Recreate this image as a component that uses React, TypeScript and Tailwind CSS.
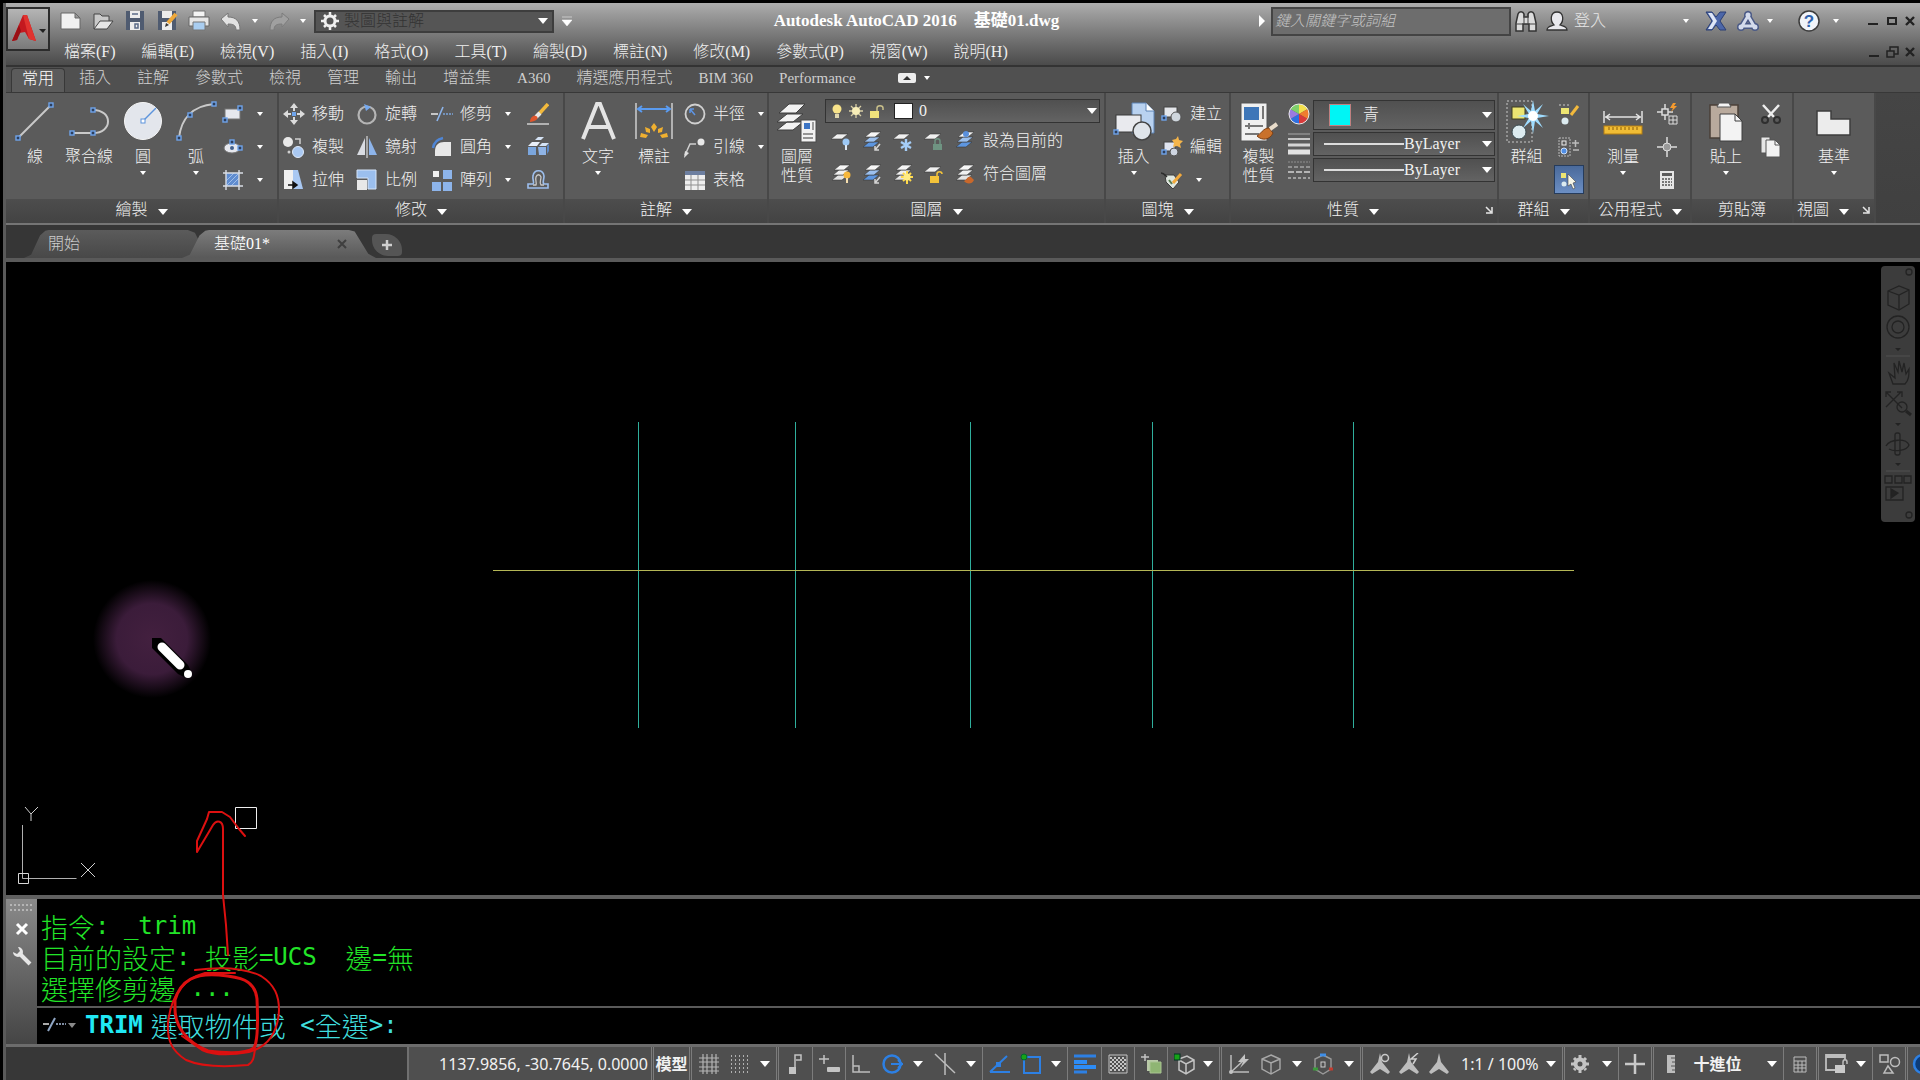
import type { ReactNode } from "react";

type IconProps = { w?: number; h?: number; box?: string; children: ReactNode };

function Icon({ w = 22, h = 22, box, children }: IconProps) {
  return (
    <svg width={w} height={h} viewBox={box ?? `0 0 ${w} ${h}`} fill="none" aria-hidden="true" className="shrink-0">
      {children}
    </svg>
  );
}

function Arrow({ big = false }: { big?: boolean }) {
  return big ? (
    <Icon w={10} h={6}>
      <path d="M0 0h10L5 6z" fill="#fff" />
    </Icon>
  ) : (
    <Icon w={6} h={4}>
      <path d="M0 0h6L3 4z" fill="#fff" />
    </Icon>
  );
}

/* ---------- shared pieces of icon artwork ---------- */

function Grip({ x, y }: { x: number; y: number }) {
  return <rect x={x - 2} y={y - 2} width="4" height="4" fill="#2d3f5c" stroke="#6ea3ea" strokeWidth="1.4" />;
}

function Sheets({ blue = false }: { blue?: boolean }) {
  return (
    <g stroke="#3a3a3a" strokeWidth="0.6">
      <path d="M1 17l6-5h10l-6 5z" fill={blue ? "#5d96e0" : "#e4e4e4"} />
      <path d="M2 12l6-5h10l-6 5z" fill={blue ? "#9cc0ee" : "#f0f0f0"} />
      <path d="M3 7l6-5h10l-6 5z" fill="#f6f6f6" />
    </g>
  );
}

function Sheet() {
  return <path d="M0 9l6-5h11l-6 5z" fill="#f0f0f0" stroke="#3a3a3a" strokeWidth="0.6" />;
}

/* ---------- big ribbon icons (44 x 44) ---------- */

const LineIcon = () => (
  <Icon w={44} h={44}>
    <path d="M5 39L38 6" stroke="#c9c9c9" strokeWidth="2" />
    <Grip x={5} y={39} />
    <Grip x={38} y={6} />
  </Icon>
);

const PolylineIcon = () => (
  <Icon w={44} h={44}>
    <path d="M5 34h21c20 0 20-23 0-23" stroke="#c9c9c9" strokeWidth="2" />
    <Grip x={5} y={34} />
    <Grip x={26} y={34} />
    <Grip x={26} y={11} />
  </Icon>
);

const CircleIcon = () => (
  <Icon w={44} h={44}>
    <circle cx="22" cy="22" r="18.5" fill="#e3e6ec" stroke="#f6f6f6" />
    <path d="M22 22L35 9" stroke="#5c93dc" strokeWidth="1.4" />
    <rect x="20" y="20" width="4" height="4" fill="#fff" stroke="#5c93dc" />
  </Icon>
);

const ArcIcon = () => (
  <Icon w={44} h={44}>
    <path d="M5 39C7 20 18 7 40 5" stroke="#c9c9c9" strokeWidth="2" />
    <Grip x={5} y={39} />
    <Grip x={16} y={16} />
    <Grip x={40} y={5} />
  </Icon>
);

const TextIcon = () => (
  <Icon w={44} h={44}>
    <path d="M7 40L21 5h3l14 35M12 28h21" stroke="#e4e4e4" strokeWidth="4" />
  </Icon>
);

const DimensionIcon = () => (
  <Icon w={44} h={44}>
    <path d="M4 4v36M40 4v36" stroke="#d6d6d6" strokeWidth="1.4" />
    <path d="M6 10h32M10 7l-4 3 4 3M34 7l4 3-4 3" stroke="#5a9bf0" strokeWidth="2" />
    <path d="M22 24l3 4-3 5-3-5zM13 28l5 2v4l-4-1zM31 28l-5 2v4l4-1zM9 34l7 2-2 3-6-1zM35 34l-7 2 2 3 6-1z" fill="#f0b030" />
  </Icon>
);

const LayerPropsIcon = () => (
  <Icon w={44} h={44}>
    <g fill="#f2f2f2" stroke="#3d3d3d">
      <path d="M2 31l10-8h16l-10 8zM2 23l10-8h16l-10 8zM4 14L14 5h16l-9 9z" />
    </g>
    <rect x="26" y="21" width="15" height="22" fill="#f2f2f2" stroke="#4a4a4a" />
    <rect x="29" y="24" width="6" height="6" fill="#3c74c4" />
    <path d="M38 23v8M28 35h10M28 39h10" stroke="#777" strokeWidth="1.4" />
  </Icon>
);

const InsertBlockIcon = () => (
  <Icon w={44} h={44}>
    <path d="M20 4h14l8 8v22H20z" fill="#b9d2f0" stroke="#5d83b5" />
    <path d="M34 4v8h8" fill="#fff" stroke="#5d83b5" />
    <rect x="4" y="16" width="25" height="17" fill="#e9eaee" stroke="#3b3b3b" />
    <circle cx="30" cy="32" r="9" fill="#dfe4ea" stroke="#444" strokeWidth="1.5" />
    <Grip x={4} y={33} />
  </Icon>
);

const MatchPropsIcon = () => (
  <Icon w={44} h={44}>
    <rect x="4" y="4" width="26" height="38" fill="#f0f0f0" stroke="#555" />
    <rect x="7" y="8" width="15" height="13" fill="#3e76b8" />
    <path d="M26 7v13M8 27h18M12 24v6M8 35h14" stroke="#777" strokeWidth="2" />
    <path d="M20 37c4-2 6-8 12-8l4 5c-3 7-11 8-16 3z" fill="#c9712b" stroke="#7d3f14" />
    <path d="M33 30l7-5" stroke="#e8dccb" strokeWidth="4" />
  </Icon>
);

const GroupIcon = () => (
  <Icon w={44} h={44}>
    <rect x="2" y="2" width="25" height="41" stroke="#c8c8c8" strokeDasharray="2 2" />
    <rect x="7" y="8" width="13" height="12" fill="#ece572" stroke="#3c3c20" />
    <circle cx="14" cy="33" r="7" fill="#dcebf0" stroke="#3a4a50" />
    <path d="M28 1l2 11 8-7-6 10 12 2-12 2 6 10-8-7-2 13-2-13-8 7 6-10-12-2 12-2-6-10 8 7z" fill="#9fdcff" />
    <circle cx="28" cy="17" r="5" fill="#fff" />
  </Icon>
);

const MeasureIcon = () => (
  <Icon w={44} h={44}>
    <path d="M3 12v12M41 12v12M4 18h36M9 15l-4 3 4 3M35 15l4 3-4 3" stroke="#e2e2e2" strokeWidth="1.5" />
    <rect x="3" y="27" width="38" height="8" fill="#f1bd35" stroke="#b57f13" />
    <path d="M8 28v3M12 28v3M16 28v3M20 28v3M24 28v3M28 28v3M32 28v3M36 28v3" stroke="#8a5d08" />
  </Icon>
);

const PasteIcon = () => (
  <Icon w={44} h={44}>
    <rect x="6" y="6" width="28" height="33" fill="#b9aa9d" stroke="#4b4039" strokeWidth="1.5" />
    <path d="M13 8l2-4h10l2 4z" fill="#f4f4f4" stroke="#555" />
    <path d="M16 15h15l7 7v20H16z" fill="#f3f3f3" stroke="#3f3f3f" />
    <path d="M31 15v7h7" stroke="#3f3f3f" />
  </Icon>
);

const BaseViewIcon = () => (
  <Icon w={44} h={44}>
    <path d="M5 12h14v8h19v16H5z" fill="#ececec" stroke="#3e3e3e" strokeWidth="1.5" />
  </Icon>
);

/* ---------- small ribbon icons (22 x 22) ---------- */

const RectangleIcon = () => (
  <Icon>
    <rect x="3" y="6" width="15" height="10" fill="#e6e8ee" stroke="#777" />
    <Grip x={3} y={17} />
    <Grip x={18} y={5} />
  </Icon>
);

const EllipseIcon = () => (
  <Icon>
    <ellipse cx="10" cy="12" rx="8" ry="5" fill="#e6e8ee" stroke="#777" />
    <circle cx="10" cy="12" r="2" fill="#44618d" />
    <Grip x={10} y={6} />
    <Grip x={18} y={12} />
  </Icon>
);

const HatchIcon = () => (
  <Icon>
    <rect x="4" y="4" width="13" height="13" fill="#5f8cd0" />
    <path d="M4 12l8-8M4 17L17 4M9 17l8-8" stroke="#9fbfe9" />
    <path d="M4 1v20M17 1v20M1 4h20M1 17h20" stroke="#d9dde5" strokeWidth="1.4" />
  </Icon>
);

const MoveIcon = () => (
  <Icon>
    <path d="M11 0l4 5H7zM11 22l4-5H7zM0 11l5-4v8zM22 11l-5-4v8z" fill="#dcdcdc" />
    <path d="M11 5v3M11 14v3M5 11h3M14 11h3" stroke="#dcdcdc" strokeWidth="2" />
    <rect x="9" y="9" width="4" height="4" fill="#6ea3ea" />
  </Icon>
);

const RotateIcon = () => (
  <Icon>
    <circle cx="11" cy="12" r="8.5" stroke="#b5b5b5" strokeWidth="2.2" />
    <path d="M8 1l7 3-5 4z" fill="#76a9ee" />
  </Icon>
);

const TrimIcon = () => (
  <Icon>
    <path d="M0 11h7" stroke="#e2e2e2" strokeWidth="1.6" />
    <path d="M12 11h10" stroke="#7ca5dc" strokeWidth="1.6" strokeDasharray="2 1" />
    <path d="M6 18L12 4" stroke="#8db4ea" strokeWidth="1.6" />
  </Icon>
);

const CopyIcon = () => (
  <Icon>
    <circle cx="5" cy="6" r="5" fill="#e8e8e8" />
    <circle cx="15" cy="16" r="5.5" fill="#a9c8f2" stroke="#dfeafa" />
    <path d="M12 3h5v5" stroke="#cfcfcf" strokeWidth="1.5" />
    <circle cx="6" cy="16" r="1.5" fill="#cfcfcf" />
  </Icon>
);

const MirrorIcon = () => (
  <Icon>
    <path d="M9 2v17H1z" fill="#d9dce2" />
    <path d="M13 2v17h8z" fill="#8db4ea" />
    <path d="M11 0v22" stroke="#f0f0f0" />
  </Icon>
);

const FilletIcon = () => (
  <Icon>
    <path d="M2 12C3 6 7 3 12 2" stroke="#4f86d6" strokeWidth="2.5" />
    <path d="M4 20v-5c0-6 4-9 9-9h7v14z" fill="#e8e8e8" />
  </Icon>
);

const StretchIcon = () => (
  <Icon>
    <path d="M1 1h9v19H1z" fill="#f0f0f0" />
    <path d="M10 1h5l5 19H10z" fill="#a9c8f2" />
    <path d="M5 16h6M10 13l4 3-4 3z" stroke="#111" fill="#111" strokeWidth="1.5" />
  </Icon>
);

const ScaleIcon = () => (
  <Icon>
    <path d="M1 1h19v19h-8V9H1z" fill="#9bbfee" stroke="#d5e4f8" />
    <rect x="1" y="11" width="10" height="10" fill="#e8e8e8" />
  </Icon>
);

const ArrayIcon = () => (
  <Icon>
    <rect x="2" y="2" width="6" height="6" fill="#f0f0f0" />
    <rect x="12" y="1" width="9" height="9" fill="#8db4ea" />
    <rect x="1" y="13" width="9" height="9" fill="#8db4ea" />
    <rect x="12" y="13" width="9" height="9" fill="#8db4ea" />
  </Icon>
);

const EraseIcon = () => (
  <Icon>
    <path d="M11 12L21 1" stroke="#f2b93c" strokeWidth="3.5" />
    <path d="M9 14l4-4" stroke="#e8e8e8" strokeWidth="4" />
    <path d="M3 19c0-4 3-7 6-6s2 5-6 6z" fill="#e0562c" />
    <path d="M0 21h22" stroke="#cfcfcf" strokeWidth="1.5" />
  </Icon>
);

const ExplodeIcon = () => (
  <Icon>
    <path d="M1 10l4-4h8l-3 4z" fill="#e9eff8" />
    <path d="M1 11h8v8H1z" fill="#7ba6dd" />
    <path d="M8 4l3-3h6l-3 3z" fill="#d5e3f5" />
    <path d="M12 10l3-3h7l-3 3z" fill="#d5e3f5" />
    <path d="M11 11h8v8h-7z" fill="#8fb4e6" />
    <path d="M20 10l2-2v7l-2 3z" fill="#5d88c4" />
  </Icon>
);

const OffsetIcon = () => (
  <Icon>
    <path d="M1 19v-4h5c2-1-1-4 0-8 1-7 10-7 11 0 0 4-2 7 0 8h4v4z" stroke="#9dbfee" strokeWidth="1.6" />
    <path d="M6 16h3c1-2-1-5 0-8 1-3 4-3 5 0 0 3-2 6 0 8h3" stroke="#c9c9c9" strokeWidth="1.3" />
  </Icon>
);

const RadiusIcon = () => (
  <Icon>
    <circle cx="11" cy="11" r="9.5" stroke="#d0d0d0" strokeWidth="1.8" />
    <path d="M11 12L6 6M6 6v4M6 6h4" stroke="#5e95e4" strokeWidth="1.5" />
  </Icon>
);

const LeaderIcon = () => (
  <Icon>
    <path d="M1 19L6 8h6" stroke="#d0d0d0" strokeWidth="1.5" />
    <path d="M0 22l1-7 4 2z" fill="#e0e0e0" />
    <circle cx="17" cy="6" r="3.5" fill="#e8e8e8" />
  </Icon>
);

const TableIcon = () => (
  <Icon>
    <rect x="1" y="2" width="20" height="19" fill="#eeeeee" />
    <rect x="1" y="2" width="20" height="4" fill="#6d7fa0" />
    <path d="M1 11h20M1 16h20M7 6v15M14 6v15" stroke="#8f8f8f" />
  </Icon>
);

const LayerOffIcon = () => (
  <Icon w={20}>
    <Sheet />
    <circle cx="15" cy="12" r="3.5" fill="#9cc8f5" />
    <path d="M15 15v5" stroke="#dce8f5" strokeWidth="2" />
  </Icon>
);

const LayerIsolateIcon = () => (
  <Icon w={20}>
    <Sheets blue />
    <path d="M18 14l-5 6M13 16v4h4" stroke="#d5d5d5" strokeWidth="1.5" />
  </Icon>
);

const LayerFreezeIcon = () => (
  <Icon w={20}>
    <Sheet />
    <path d="M13 9v12M8 12l10 6M8 18l10-6" stroke="#a5cdf7" strokeWidth="2.4" />
  </Icon>
);

const LayerLockIcon = () => (
  <Icon w={20}>
    <Sheet />
    <path d="M11 14v-3c0-3 5-3 5 0v3" stroke="#6f9482" strokeWidth="1.5" />
    <rect x="9" y="14" width="9" height="6" fill="#6f9482" />
  </Icon>
);

const LayerCurrentIcon = () => (
  <Icon w={20}>
    <Sheets blue />
    <circle cx="11" cy="4" r="3" fill="#5a90dc" />
  </Icon>
);

const LayerOnIcon = () => (
  <Icon w={20}>
    <Sheets />
    <circle cx="16" cy="12" r="3.5" fill="#f6b73c" />
    <path d="M16 15v5" stroke="#f6dfae" strokeWidth="2" />
  </Icon>
);

const LayerThawIcon = () => (
  <Icon w={20}>
    <Sheets />
    <path d="M14 8v13M8 14h12M10 10l8 8M10 18l8-8" stroke="#ffd94a" strokeWidth="2" />
    <circle cx="14" cy="14" r="3.5" fill="#ffec86" />
  </Icon>
);

const LayerUnlockIcon = () => (
  <Icon w={20}>
    <Sheet />
    <path d="M13 14v-3c0-3 5-3 5 0" stroke="#f3c33a" strokeWidth="1.5" />
    <rect x="6" y="13" width="9" height="7" fill="#f3c33a" />
  </Icon>
);

const LayerMatchIcon = () => (
  <Icon w={20}>
    <Sheets />
    <path d="M9 18c3-1 3-5 7-4l3 3c-2 5-8 4-10 1z" fill="#c9682b" />
  </Icon>
);

const BlockCreateIcon = () => (
  <Icon>
    <rect x="3" y="4" width="13" height="10" fill="#e4e6ea" stroke="#444" />
    <circle cx="15" cy="14" r="5" fill="#cfd6dd" stroke="#555" />
    <Grip x={3} y={15} />
  </Icon>
);

const BlockEditIcon = () => (
  <Icon>
    <rect x="3" y="6" width="11" height="9" fill="#dfe4f0" stroke="#444" />
    <circle cx="13" cy="16" r="4" fill="#cfd6e2" stroke="#555" />
    <path d="M17 0l1 4 4 1-3 3 1 4-4-2-4 1 1-4-2-3 4-1z" fill="#f5b54a" />
    <Grip x={3} y={16} />
  </Icon>
);

const BlockAttrIcon = () => (
  <Icon>
    <path d="M4 6h9l5 7-6 7-7-7z" fill="#dfe6df" stroke="#3c3c3c" />
    <path d="M0 4c3 0 4 2 6 4" stroke="#2c2c2c" strokeWidth="1.5" />
    <path d="M8 11l3 4" stroke="#5a7d53" strokeWidth="2" />
    <path d="M12 14L20 5" stroke="#f2a93c" strokeWidth="3" />
  </Icon>
);

const ColorWheelIcon = () => (
  <Icon>
    <path d="M11 11V1a10 10 0 018.700 5z" fill="#f4e04d" />
    <path d="M11 11l8.700-5a10 10 0 010 10z" fill="#f07d2e" />
    <path d="M11 11l8.700 5A10 10 0 0111 21z" fill="#d93a3a" />
    <path d="M11 11v10a10 10 0 01-8.700-5z" fill="#2f6fe0" />
    <path d="M11 11l-8.700 5a10 10 0 010-10z" fill="#9a7be0" />
    <path d="M11 11L2.300 6A10 10 0 0111 1z" fill="#7ed06a" />
    <circle cx="11" cy="11" r="10" stroke="#e8e8e8" />
  </Icon>
);

const LineweightIcon = () => (
  <Icon>
    <path d="M0 1h22" stroke="#aaa" />
    <path d="M0 6h22" stroke="#c8c8c8" strokeWidth="2" />
    <path d="M0 12h22" stroke="#d4d4d4" strokeWidth="3" />
    <path d="M0 19h22" stroke="#e2e2e2" strokeWidth="5" />
  </Icon>
);

const LinetypeIcon = () => (
  <Icon>
    <path d="M0 3h22" stroke="#909090" strokeDasharray="2 1" />
    <path d="M0 8h22" stroke="#a5a5a5" strokeDasharray="4 2" strokeWidth="1.5" />
    <path d="M0 13h22" stroke="#b5b5b5" strokeDasharray="6 2" strokeWidth="2" />
    <path d="M0 19h22" stroke="#a0a0a0" strokeDasharray="3 2" strokeWidth="2" />
  </Icon>
);

const UngroupIcon = () => (
  <Icon>
    <path d="M1 2h12" stroke="#ccc" strokeDasharray="2 2" />
    <rect x="3" y="5" width="8" height="6" fill="#ece572" />
    <circle cx="7" cy="18" r="3.5" fill="#dcebf0" />
    <path d="M13 12l7-9" stroke="#f2b93c" strokeWidth="3" />
  </Icon>
);

const GroupEditIcon = () => (
  <Icon>
    <rect x="1" y="2" width="11" height="18" stroke="#bbb" strokeDasharray="2 1" />
    <rect x="4" y="5" width="4" height="4" stroke="#eee" />
    <circle cx="6" cy="15" r="3" fill="#4f8ee6" stroke="#cfe0f7" />
    <path d="M14 7h7M17.500 4v7M15 14h6" stroke="#bbb" strokeWidth="1.5" />
  </Icon>
);

const GroupSelectIcon = () => (
  <Icon>
    <rect x="3" y="4" width="5" height="5" fill="#ece572" />
    <circle cx="6" cy="15" r="2.5" fill="#dcebf0" />
    <path d="M10 5l8 8-3 1 2 5-2 1-2-5-3 2z" fill="#f6f6e8" stroke="#444" strokeWidth="0.6" />
  </Icon>
);

const QuickSelectIcon = () => (
  <Icon>
    <path d="M9 1v16M1 9h16" stroke="#ddd" strokeWidth="1.5" />
    <rect x="6" y="6" width="6" height="6" fill="#5b5b5b" stroke="#ddd" strokeWidth="1.5" />
    <path d="M17 0l-3 5h3l-2 4 6-6h-3l2-3z" fill="#f59a2e" />
    <path d="M13 13h8v8h-8zM13 17h8M17 13v8" stroke="#ddd" />
  </Icon>
);

const PointIcon = () => (
  <Icon>
    <path d="M11 1v20M1 11h20" stroke="#ddd" strokeWidth="1.5" />
    <circle cx="11" cy="11" r="4" fill="#9a9a9a" stroke="#ddd" />
  </Icon>
);

const CalculatorIcon = () => (
  <Icon>
    <rect x="4" y="2" width="14" height="18" fill="#e6e6e6" />
    <rect x="6" y="4" width="10" height="3" fill="#5c5c5c" />
    <path d="M6 10h10M6 13h10M6 16h10" stroke="#777" strokeWidth="2" strokeDasharray="2 1" />
  </Icon>
);

const CutIcon = () => (
  <Icon>
    <path d="M3 2l11 12M19 2L8 14" stroke="#eee" strokeWidth="2.5" />
    <circle cx="5" cy="17" r="3" stroke="#2f2f2f" strokeWidth="2" />
    <circle cx="17" cy="17" r="3" stroke="#2f2f2f" strokeWidth="2" />
  </Icon>
);

const CopyClipIcon = () => (
  <Icon>
    <path d="M1 1h9v16H1z" fill="#e6e6e6" stroke="#555" />
    <path d="M6 4h9l5 5v12H6z" fill="#f2f2f2" stroke="#555" />
    <path d="M15 4v5h5" stroke="#555" />
  </Icon>
);

/* ---------- title bar ---------- */

const quickAccess: { label: string; art: ReactNode }[] = [
  { label: "新建", art: <path d="M1 3h14l5 5v11H1zM15 3v5h5" fill="#f0f0f0" stroke="#666" /> },
  {
    label: "開啟",
    art: (
      <>
        <path d="M2 19V4h6l2 2h7v5" fill="#c9c9c9" stroke="#444" />
        <path d="M2 19l6-8h13l-6 8z" fill="#e6e6e6" stroke="#444" />
      </>
    ),
  },
  {
    label: "儲存",
    art: (
      <>
        <path d="M2 1h18v19H2z" fill="#4f5b70" />
        <path d="M6 1h10v7H6zM6 12h10v8H6z" fill="#ececec" />
        <path d="M8 4h6M11 14h3v4h-3z" stroke="#5a6a86" strokeWidth="1.5" />
      </>
    ),
  },
  {
    label: "另存",
    art: (
      <>
        <path d="M2 1h18v19H2z" fill="#4f5b70" />
        <path d="M6 1h10v7H6zM6 12h10v8H6z" fill="#ececec" />
        <path d="M12 13l8-9" stroke="#f0a93a" strokeWidth="4" />
        <path d="M9 17l1-4 3 2z" fill="#333" />
      </>
    ),
  },
  {
    label: "出圖",
    art: (
      <>
        <path d="M5 1h12v6H5z" fill="#f4f4f4" stroke="#777" />
        <path d="M1 7h20v9H1z" fill="#e6e6e6" stroke="#666" />
        <path d="M5 12h12v8H5z" fill="#a9cdf0" stroke="#777" />
      </>
    ),
  },
  { label: "退回", art: <path d="M1 9l7-6v4c8 0 12 4 12 13h-4c0-5-3-6-8-6v3z" fill="#e2e2e2" stroke="#777" /> },
];

const menus = [
  "檔案(F)", "編輯(E)", "檢視(V)", "插入(I)", "格式(O)", "工具(T)",
  "繪製(D)", "標註(N)", "修改(M)", "參數式(P)", "視窗(W)", "說明(H)",
];

function TitleBar() {
  return (
    <header className="flex h-[62px] bg-linear-to-b from-[#adadad] to-[#4b4b4b]">
      <button
        type="button"
        aria-label="應用程式功能表"
        className="mt-1 flex h-11 w-11 shrink-0 items-center justify-center border-2 border-[#2c2c2c] bg-linear-to-b from-[#b5b5b5] to-[#7a7a7a]"
      >
        <Icon w={38} h={36}>
          <path d="M3 30L14 4h4l9 26-7-2-4-7-6 1-2 7z" fill="#c4191f" />
          <path d="M14 4h4l9 26-7-2z" fill="#e0332f" />
          <path d="M3 30l5-1 4-9-2-6z" fill="#9a1015" />
          <path d="M30 18h7l-3 4z" fill="#222" />
        </Icon>
      </button>

      <div className="min-w-0 flex-1">
        <div className="flex h-9 items-center">
          <div className="flex items-center gap-[10px] pl-[10px]">
            {quickAccess.map(({ label, art }) => (
              <button key={label} type="button" aria-label={label}>
                <Icon>{art}</Icon>
              </button>
            ))}
            <Arrow />
            <button type="button" aria-label="重做">
              <Icon>
                <path d="M21 9l-7-6v4C6 7 2 11 2 20h4c0-5 3-6 8-6v3z" fill="#a0a0a0" stroke="#7c7c7c" />
              </Icon>
            </button>
            <Arrow />
          </div>

          <div className="ml-2 flex h-[23px] w-60 items-center gap-1 border-2 border-[#3d3d3d] bg-[#555] px-1">
            <Icon w={20} h={18}>
              <circle cx="10" cy="9" r="5" stroke="#f0f0f0" strokeWidth="3" />
              <path d="M10 0v3M10 15v3M1 9h3M16 9h3M4 3l2 2M14 13l2 2M16 3l-2 2M6 13l-2 2" stroke="#f0f0f0" strokeWidth="2.5" />
            </Icon>
            <select aria-label="工作區" className="min-w-0 flex-1 appearance-none text-base leading-4 text-[#333]">
              <option>製圖與註解</option>
            </select>
            <Arrow big />
          </div>
          <div className="ml-2 w-3">
            <Icon w={10} h={10}>
              <path d="M0 1h10M0 4h10L5 10z" fill="#fff" stroke="#fff" strokeWidth="0.5" />
            </Icon>
          </div>

          <h1 className="flex-1 text-center text-[17px] font-bold whitespace-pre text-white">
            {"Autodesk AutoCAD 2016    基礎01.dwg"}
          </h1>

          <Icon w={6} h={12}>
            <path d="M0 0l6 6-6 6z" fill="#fff" />
          </Icon>
          <input
            type="text"
            aria-label="搜尋"
            placeholder="鍵入關鍵字或詞組"
            className="ml-[6px] h-[29px] w-60 border-2 border-[#444] bg-[#6d6d6d] px-[2px] text-[15px] italic placeholder:text-[#c4c4c4]"
          />
          <button type="button" aria-label="尋找" className="ml-[3px]">
            <Icon w={24}>
              <path d="M4 4c1-3 5-3 6 0v3h4V4c1-3 5-3 6 0l2 9v8h-7v-7H9v7H2v-8z" fill="#dcdcdc" stroke="#333" strokeWidth="1.5" />
              <path d="M2 14h7M15 14h7M10 4v10M14 4v10" stroke="#444" />
            </Icon>
          </button>
          <button type="button" className="ml-2 flex w-[143px] items-center gap-[6px] text-base text-[#e6e6e6]">
            <Icon>
              <path d="M1 20c0-4 4-4 7-5-4-4-4-13 3-13s7 9 3 13c3 1 7 1 7 5z" fill="#e9e9ee" stroke="#333" strokeWidth="1.3" />
            </Icon>
            登入
            <span className="ml-auto">
              <Arrow />
            </span>
          </button>
          <button type="button" aria-label="Exchange" className="ml-4">
            <Icon>
              <path d="M1 2h6l4 5 4-5h6l-6 9 6 9h-6l-4-5-4 5H1l6-9z" fill="#4c66a8" stroke="#2b3f74" />
              <path d="M3 3h4l5 8-5 8H3l5-8z" fill="#dfe6f5" />
            </Icon>
          </button>
          <button type="button" aria-label="A360" className="ml-[10px] flex items-center gap-2">
            <Icon>
              <g stroke="#4b5a86" strokeWidth="6">
                <path d="M11 6L5 16h12z" />
                <path d="M11 5h0M4 17h0M18 17h0" strokeLinecap="round" strokeWidth="8" />
              </g>
              <g stroke="#d4dbec" strokeWidth="3">
                <path d="M11 6L5 16h12z" />
                <path d="M11 5h0M4 17h0M18 17h0" strokeLinecap="round" strokeWidth="5" />
              </g>
            </Icon>
            <Arrow />
          </button>
          <button type="button" aria-label="說明" className="ml-6 flex items-center gap-3">
            <svg width="24" height="24" viewBox="0 0 24 24" aria-hidden="true">
              <circle cx="12" cy="12" r="10" fill="#f1f4fa" stroke="#3c3c3c" strokeWidth="1.5" />
              <text x="12" y="18" textAnchor="middle" className="fill-[#2f62ad] font-['Liberation_Sans',sans-serif] text-[17px] font-bold">
                ?
              </text>
            </svg>
            <Arrow />
          </button>
          <div className="ml-7 flex items-center gap-2 pr-[5px]">
            <button type="button" aria-label="最小化">
              <Icon w={12} h={12}>
                <path d="M1 9h10" stroke="#222" strokeWidth="2" />
              </Icon>
            </button>
            <button type="button" aria-label="最大化">
              <Icon w={10} h={12}>
                <path d="M1 3h8v6H1z" stroke="#222" strokeWidth="2" />
              </Icon>
            </button>
            <button type="button" aria-label="關閉">
              <Icon w={10} h={12}>
                <path d="M1 2l8 8M9 2l-8 8" stroke="#222" strokeWidth="2.4" />
              </Icon>
            </button>
          </div>
        </div>

        <nav className="flex h-[26px] items-center pl-[14px] text-base leading-[26px] text-[#f0f0f0]">
          <div className="flex gap-[26px]">
            {menus.map((m) => (
              <button key={m} type="button">
                {m}
              </button>
            ))}
          </div>
          <div className="ml-auto flex items-center gap-[6px] pr-[5px]">
            <Icon w={12} h={12}>
              <path d="M1 10h10" stroke="#222" strokeWidth="2" />
            </Icon>
            <Icon w={13} h={12}>
              <path d="M1 5h7v6H1zM4 5V1h8v7H8" stroke="#222" strokeWidth="1.5" />
            </Icon>
            <Icon w={10} h={12}>
              <path d="M1 2l8 8M9 2l-8 8" stroke="#222" strokeWidth="2.4" />
            </Icon>
          </div>
        </nav>
      </div>
    </header>
  );
}

/* ---------- ribbon ---------- */

const ribbonTabs = ["插入", "註解", "參數式", "檢視", "管理", "輸出", "增益集", "A360", "精選應用程式", "BIM 360", "Performance"];

function RibbonTabs() {
  return (
    <div className="flex h-[27px] items-end border-t-2 border-[#333] bg-[#505050] text-[#cfcfcf]">
      <button
        type="button"
        className="ml-[5px] h-6 w-[54px] rounded-t-sm border border-b-0 border-[#383838] bg-[#5b5b5b] pb-1 text-base leading-[18px] text-white"
      >
        常用
      </button>
      <div className="flex items-center gap-[26px] pb-[2px] pl-[14px]">
        {ribbonTabs.map((t) => (
          <button key={t} type="button">
            <span className={/^[A-Z]/.test(t) ? "text-[15px]" : "text-base leading-6"}>{t}</span>
          </button>
        ))}
        <button type="button" aria-label="最小化功能區" className="ml-4 flex items-center gap-2">
          <Icon w={18} h={10}>
            <rect width="18" height="10" rx="2" fill="#eee" />
            <path d="M5 7h8L9 3z" fill="#333" />
          </Icon>
          <Arrow />
        </button>
      </div>
    </div>
  );
}

type PanelProps = { title: string; width: string; arrow?: boolean; launcher?: boolean; children: ReactNode };

function Panel({ title, width, arrow = true, launcher = false, children }: PanelProps) {
  return (
    <section className={`flex shrink-0 flex-col border-r-2 border-[#484848] bg-[#5b5b5b] ${width}`}>
      <div className="flex h-[107px] items-start pt-1">{children}</div>
      <h2 className="flex h-6 items-center justify-center gap-[10px] bg-linear-to-b from-[#4d4d4d] to-[#434343] pb-[2px] text-base leading-5 whitespace-nowrap">
        <span className={launcher ? "ml-auto" : ""}>{title}</span>
        {arrow && (
          <span className="pt-1">
            <Arrow big />
          </span>
        )}
        {launcher && (
          <span className="ml-auto pr-1">
            <Icon w={8} h={8}>
              <path d="M1 1l5 5M7 1v6H1" stroke="#e6e6e6" strokeWidth="1.5" />
            </Icon>
          </span>
        )}
      </h2>
    </section>
  );
}

type BigProps = { icon: ReactNode; label: string; width: string; menu?: boolean };

function BigButton({ icon, label, width, menu = false }: BigProps) {
  return (
    <button type="button" className={`flex shrink-0 flex-col items-center pt-[2px] text-base leading-[19px] ${width}`}>
      {icon}
      <span className="mt-1 whitespace-pre-line">{label}</span>
      {menu && (
        <span className="pt-[5px]">
          <Arrow />
        </span>
      )}
    </button>
  );
}

function Small({ icon, label, menu = false }: { icon: ReactNode; label?: string; menu?: boolean }) {
  return (
    <button type="button" className="flex h-[33px] items-center gap-[7px] text-base leading-5 whitespace-nowrap">
      {icon}
      {label}
      {menu && (
        <span className="pl-[6px]">
          <Arrow />
        </span>
      )}
    </button>
  );
}

function Combo({ label, value, height, lead }: { label: string; value: string; height: string; lead: ReactNode }) {
  return (
    <div className={`flex items-center border border-[#333] bg-linear-to-b from-[#505050] to-[#636363] pr-[2px] ${height}`}>
      {lead}
      <select aria-label={label} className="min-w-0 flex-1 appearance-none text-base leading-5">
        <option>{value}</option>
      </select>
      <Arrow big />
    </div>
  );
}

function Ribbon() {
  return (
    <div className="flex h-[131px] overflow-hidden border-t border-[#383838] bg-linear-to-b from-[#454545] to-[#404040] text-[#f2f2f2]">
      <Panel title="繪製" width="w-[273px]">
        <div className="flex pl-[2px]">
          <BigButton icon={<LineIcon />} label="線" width="w-[54px]" />
          <BigButton icon={<PolylineIcon />} label="聚合線" width="w-[54px]" />
          <BigButton icon={<CircleIcon />} label="圓" width="w-[54px]" menu />
          <BigButton icon={<ArcIcon />} label="弧" width="w-[52px]" menu />
        </div>
        <div>
          <Small icon={<RectangleIcon />} menu />
          <Small icon={<EllipseIcon />} menu />
          <Small icon={<HatchIcon />} menu />
        </div>
      </Panel>

      <Panel title="修改" width="w-[286px]">
        <div className="ml-1 w-[73px]">
          <Small icon={<MoveIcon />} label="移動" />
          <Small icon={<CopyIcon />} label="複製" />
          <Small icon={<StretchIcon />} label="拉伸" />
        </div>
        <div className="w-[75px]">
          <Small icon={<RotateIcon />} label="旋轉" />
          <Small icon={<MirrorIcon />} label="鏡射" />
          <Small icon={<ScaleIcon />} label="比例" />
        </div>
        <div className="w-24">
          <Small icon={<TrimIcon />} label="修剪" menu />
          <Small icon={<FilletIcon />} label="圓角" menu />
          <Small icon={<ArrayIcon />} label="陣列" menu />
        </div>
        <div>
          <Small icon={<EraseIcon />} />
          <Small icon={<ExplodeIcon />} />
          <Small icon={<OffsetIcon />} />
        </div>
      </Panel>

      <Panel title="註解" width="w-[204px]">
        <div className="flex pr-[2px] pl-[5px]">
          <BigButton icon={<TextIcon />} label="文字" width="w-14" menu />
          <BigButton icon={<DimensionIcon />} label="標註" width="w-14" />
        </div>
        <div>
          <Small icon={<RadiusIcon />} label="半徑" menu />
          <Small icon={<LeaderIcon />} label="引線" menu />
          <Small icon={<TableIcon />} label="表格" />
        </div>
      </Panel>

      <Panel title="圖層" width="w-[337px]">
        <BigButton icon={<LayerPropsIcon />} label={"圖層\n性質"} width="w-14" />
        <div className="min-w-0 flex-1 pt-[2px] pr-1">
          <Combo
            label="圖層"
            value="0"
            height="h-6"
            lead={
              <div className="flex items-center gap-[5px] pr-[6px] pl-[5px]">
                <Icon w={12} h={18}>
                  <circle cx="6" cy="7" r="4.5" fill="#f8e38a" />
                  <path d="M4 12h4v4H4z" fill="#e0d7ae" />
                </Icon>
                <Icon w={16} h={18}>
                  <path d="M8 2v14M1 9h14M3 4l10 10M3 14L13 4" stroke="#d9cfa6" strokeWidth="1.3" />
                  <circle cx="8" cy="9" r="4" fill="#f8eeb8" />
                </Icon>
                <Icon w={16} h={18}>
                  <path d="M8 9V6c0-3 6-3 6 0v2" stroke="#c9c08a" strokeWidth="1.5" />
                  <path d="M1 9h9v7H1z" fill="#f0e27c" />
                </Icon>
                <span className="ml-1 h-4 w-[19px] border border-[#222] bg-white" />
              </div>
            }
          />
          <div className="flex h-[35px] items-center">
            {[LayerOffIcon, LayerIsolateIcon, LayerFreezeIcon, LayerLockIcon].map((I, i) => (
              <button key={i} type="button" className="w-[31px] pl-[6px]">
                <I />
              </button>
            ))}
            <button type="button" className="flex items-center gap-2 pl-[6px] text-base leading-5">
              <LayerCurrentIcon />
              設為目前的
            </button>
          </div>
          <div className="flex h-[31px] items-center">
            {[LayerOnIcon, LayerIsolateIcon, LayerThawIcon, LayerUnlockIcon].map((I, i) => (
              <button key={i} type="button" className="w-[31px] pl-[6px]">
                <I />
              </button>
            ))}
            <button type="button" className="flex items-center gap-2 pl-[6px] text-base leading-5">
              <LayerMatchIcon />
              符合圖層
            </button>
          </div>
        </div>
      </Panel>

      <Panel title="圖塊" width="w-[125px]">
        <BigButton icon={<InsertBlockIcon />} label="插入" width="w-[55px]" menu />
        <div>
          <Small icon={<BlockCreateIcon />} label="建立" />
          <Small icon={<BlockEditIcon />} label="編輯" />
          <Small icon={<BlockAttrIcon />} menu />
        </div>
      </Panel>

      <Panel title="性質" width="w-[268px]" launcher>
        <BigButton icon={<MatchPropsIcon />} label={"複製\n性質"} width="w-[55px]" />
        <div className="flex w-[27px] flex-col gap-1 pt-[6px] pl-[2px]">
          <ColorWheelIcon />
          <div className="pt-1">
            <LineweightIcon />
          </div>
          <LinetypeIcon />
        </div>
        <div className="flex min-w-0 flex-1 flex-col gap-[2px] pt-[3px] pr-[2px]">
          <Combo
            label="顏色"
            value="青"
            height="h-[30px]"
            lead={<span className="mr-3 ml-[15px] h-[22px] w-[22px] border border-[#c08080] bg-[#00f5f5]" />}
          />
          <Combo label="線粗" value="ByLayer" height="h-6" lead={<span className="ml-[10px] h-[2px] w-20 bg-[#dcdcdc]" />} />
          <Combo label="線型" value="ByLayer" height="h-6" lead={<span className="ml-[10px] h-[2px] w-20 bg-[#dcdcdc]" />} />
        </div>
      </Panel>

      <Panel title="群組" width="w-[91px]">
        <BigButton icon={<GroupIcon />} label="群組" width="w-[55px]" />
        <div className="flex flex-col items-center">
          <Small icon={<UngroupIcon />} />
          <Small icon={<GroupEditIcon />} />
          <button
            type="button"
            aria-label="群組選取"
            aria-pressed="true"
            className="mt-[2px] flex h-[29px] w-[30px] items-center justify-center border border-[#263c5c] bg-linear-to-b from-[#4a6a9b] to-[#6c8fc4]"
          >
            <GroupSelectIcon />
          </button>
        </div>
      </Panel>

      <Panel title="公用程式" width="w-[102px]">
        <BigButton icon={<MeasureIcon />} label="測量" width="w-[66px]" menu />
        <div>
          <Small icon={<QuickSelectIcon />} />
          <Small icon={<PointIcon />} />
          <Small icon={<CalculatorIcon />} />
        </div>
      </Panel>

      <Panel title="剪貼簿" width="w-[102px]" arrow={false}>
        <BigButton icon={<PasteIcon />} label="貼上" width="w-[68px]" menu />
        <div>
          <Small icon={<CutIcon />} />
          <Small icon={<CopyClipIcon />} />
        </div>
      </Panel>

      <Panel title="視圖" width="w-[82px]" launcher>
        <BigButton icon={<BaseViewIcon />} label="基準" width="w-20" menu />
      </Panel>
    </div>
  );
}

function DocumentTabs() {
  return (
    <div className="flex h-[39px] items-end border-t-2 border-b-4 border-t-[#757575] border-b-[#5a5a5a] bg-[#363636] pl-[18px] text-base">
      <button
        type="button"
        className="h-7 w-[178px] bg-linear-to-b from-[#5b5b5b] to-[#484848] pl-6 text-left text-[#cdcdcd] [clip-path:polygon(0_100%,4%_88%,9%_20%,12%_3%,14%_0,92%_0,96%_10%,100%_60%,100%_100%)]"
      >
        開始
      </button>
      <div className="-ml-5 flex h-7 w-[194px] items-center bg-linear-to-b from-[#7c7c7c] to-[#595959] pl-8 text-white [clip-path:polygon(0_100%,4%_88%,9%_20%,12%_3%,14%_0,86%_0,89%_5%,96%_85%,100%_100%)]">
        <button type="button" className="flex-1 text-left">
          基礎01*
        </button>
        <button type="button" aria-label="關閉標籤" className="mr-7">
          <Icon w={12} h={12}>
            <path d="M2 2l8 8M10 2l-8 8" stroke="#3f3f3f" strokeWidth="2" />
          </Icon>
        </button>
      </div>
      <button
        type="button"
        aria-label="新圖檔"
        className="-ml-1 mb-[2px] flex h-[22px] w-[30px] items-center justify-center rounded-tl-sm rounded-tr-2xl rounded-br-sm rounded-bl-2xl bg-[#555]"
      >
        <Icon w={12} h={12}>
          <path d="M6 1v10M1 6h10" stroke="#d0d0d0" strokeWidth="2.5" />
        </Icon>
      </button>
    </div>
  );
}

/* ---------- drawing area ---------- */

const verticals = [632, 789, 964, 1146, 1347];

function NavigationBar() {
  return (
    <div className="absolute top-1 right-[5px] rounded bg-[#3c3c3c]">
      <Icon w={34} h={256}>
        <g stroke="#232323" strokeWidth="1.3">
          <circle cx="28" cy="6" r="3" />
          <path d="M7 25l11-5 10 4v14l-10 6-11-5zM7 25l11 4 10-5M18 29v14" />
          <circle cx="17" cy="61" r="11" />
          <circle cx="17" cy="61" r="6" />
          <path d="M5 90h24M5 205h24" stroke="#4a4a4a" />
          <path d="M8 107l4 11h12c4-4 4-9 4-15l-3 5-2-11-2 9-3-11-1 11-4-9 1 15z" />
          <path d="M5 126l16 16M20 126L5 141M5 131v-5h5M16 126h5v5" />
          <circle cx="21" cy="141" r="5" />
          <path d="M25 145l5 4" strokeWidth="3" />
          <rect x="14" y="167" width="5" height="22" rx="2" />
          <path d="M5 180c4-7 20-8 23-1-2 6-15 7-20 4" />
          <path d="M4 210h7v7H4zM14 210h7v7h-7zM23 210h7v7h-7zM5 221h17v13H5z" />
          <path d="M10 223l7 4-7 5z" fill="#232323" />
          <circle cx="28" cy="249" r="3" />
        </g>
        <path d="M14 82h6l-3 3zM14 157h6l-3 3zM14 197h6l-3 3z" fill="#222" />
      </Icon>
    </div>
  );
}

function Drawing() {
  return (
    <main className="relative min-h-[600px] flex-1 overflow-hidden bg-black">
      <svg width="1914" height="633" viewBox="0 0 1914 633" className="absolute top-0 left-0" aria-label="圖面">
        <defs>
          <radialGradient id="halo">
            <stop offset="0" stopColor="#43203f" />
            <stop offset="0.6" stopColor="#3b1c3a" />
            <stop offset="1" stopColor="#000" />
          </radialGradient>
        </defs>
        {verticals.map((x) => (
          <path key={x} d={`M${x + 0.5} 160v306`} stroke="#2fae9c" />
        ))}
        <path d="M487 308.500h1081" stroke="#b4b656" />
        <circle cx="146" cy="377" r="59" fill="url(#halo)" />
        <g transform="translate(146 376)">
          <path d="M0 0h9l27 27 4 8-6 5-8-4L0 10z" fill="#000" />
          <path d="M10 9l18 18" stroke="#fff" strokeWidth="9" strokeLinecap="round" />
          <circle cx="36" cy="36" r="4" fill="#fff" />
        </g>
      </svg>

      <svg width="270" height="160" viewBox="0 780 270 160" className="absolute bottom-0 left-0 overflow-visible" aria-label="UCS">
        <g transform="translate(-6 45)" fill="none" stroke="#b0b0b0">
          <path d="M22.500 825v53.500h54" />
          <path d="M18.500 873.500h10v10h-10z" stroke="#d8d8d8" />
          <path d="M25 807l6 7 7-7M31 814v7M81 863l14 14M95 863l-14 14" stroke="#d0d0d0" />
          <path d="M235.500 807.500h21v21h-21z" stroke="#eee" />
        </g>
      </svg>
      <NavigationBar />
    </main>
  );
}

/* ---------- command window ---------- */

// Latin runs are monospaced and sit a little smaller than the ideographs.
function Mono({ children }: { children: ReactNode }) {
  return <span className="font-['DejaVu_Sans_Mono',monospace] text-2xl leading-[31px] whitespace-pre">{children}</span>;
}

function HistoryLine({ children }: { children: ReactNode }) {
  return <p className="flex h-[31px] items-center leading-[31px]">{children}</p>;
}

function CommandWindow() {
  return (
    <section className="flex h-[149px] border-t-4 border-[#606060] bg-black">
      <div className="flex w-[31px] shrink-0 flex-col items-center gap-[10px] bg-linear-to-b from-[#8a8a8a] to-[#454545] pt-[5px]">
        <Icon w={24} h={8}>
          <path d="M0 1h24M0 6h24" stroke="#b5b5b5" strokeWidth="2" strokeDasharray="2 2" />
        </Icon>
        <button type="button" aria-label="關閉">
          <Icon w={14} h={14}>
            <path d="M2 2l10 10M12 2L2 12" stroke="#fff" strokeWidth="3" />
          </Icon>
        </button>
        <button type="button" aria-label="自訂">
          <Icon w={20} h={20}>
            <path d="M7 7l11 11" stroke="#e6e6e6" strokeWidth="4" />
            <path d="M6 1a5 5 0 11-5 5l4 2 3-3z" fill="#e6e6e6" />
          </Icon>
        </button>
      </div>

      <div className="min-w-0 flex-1 font-['Noto_Sans_CJK_TC',sans-serif] text-[27px] font-light">
        <div className="h-[109px] border-b-2 border-[#5a5a5a] pt-3 pl-1 text-[#22e428]">
          <HistoryLine>
            指令<Mono>: _trim</Mono>
          </HistoryLine>
          <HistoryLine>
            目前的設定<Mono>: </Mono>投影<Mono>=UCS  </Mono>邊<Mono>=</Mono>無
          </HistoryLine>
          <HistoryLine>
            選擇修剪邊<Mono> ...</Mono>
          </HistoryLine>
        </div>
        <label className="flex h-[34px] items-center pl-[6px] leading-[31px] text-[#40dede]">
          <Icon w={34} h={20}>
            <path d="M0 9h6" stroke="#aaa" strokeWidth="2" />
            <path d="M13 9h10" stroke="#7f8da3" strokeWidth="2" strokeDasharray="2 1" />
            <path d="M5 16L12 3" stroke="#8fa6c4" strokeWidth="2" />
            <path d="M25 8h8l-4 5z" fill="#8a8a8a" />
          </Icon>
          <span className="pr-2 pl-2 font-['DejaVu_Sans_Mono',monospace] text-2xl leading-[31px] font-bold text-[#20e8f4]">TRIM</span>
          選取物件或<Mono> &lt;</Mono>全選<Mono>&gt;:</Mono>
          <input type="text" aria-label="指令行" className="min-w-0 flex-1 outline-none" />
        </label>
      </div>
    </section>
  );
}

/* ---------- status bar ---------- */

function Segment({ width, double = false, children }: { width: string; double?: boolean; children: ReactNode }) {
  return (
    <div
      className={`flex h-full shrink-0 items-center justify-between border-[#7c7c7c] px-[6px] whitespace-nowrap ${
        double ? "border-r-3 border-double" : "border-r"
      } ${width}`}
    >
      {children}
    </div>
  );
}

function Annotate({ extra }: { extra?: ReactNode }) {
  return (
    <Icon>
      <path d="M11 0l2 9 8 10-2 2-8-5-8 5-2-2 8-10z" fill="#bdbdbd" />
      {extra}
    </Icon>
  );
}

function StatusBar() {
  return (
    <footer className="flex h-9 shrink-0 justify-end overflow-hidden border-t-3 border-[#6c6c6c] bg-[#373737] font-['Noto_Sans','Noto_Sans_CJK_TC',sans-serif] text-base font-normal text-[#f2f2f2]">
      <div className="flex h-full shrink-0 border-l-2 border-[#707070] bg-[#4f4f4f]">
        <Segment width="w-[245px]" double>
          <span className="pl-6">1137.9856, -30.7645, 0.0000</span>
        </Segment>
        <button type="button" className="h-full w-[38px] border-r-3 border-double border-[#7c7c7c] font-bold whitespace-nowrap">
          模型
        </button>
        <Segment width="w-[87px]" double>
          <Icon>
            <path d="M5 1v20M9 1v20M14 1v20M18 1v20M1 5h20M1 9h20M1 14h20M1 18h20" stroke="#b5b5b5" strokeWidth="1.2" />
          </Icon>
          <Icon w={20} h={20}>
            <path d="M1 2h18M1 6h18M1 10h18M1 14h18M1 18h18" stroke="#b0b0b0" strokeWidth="2" strokeDasharray="1 3" />
          </Icon>
          <Arrow big />
        </Segment>
        <Segment width="w-[34px]">
          <Icon>
            <path d="M10 19V2h6v5h-5" stroke="#c4c4c4" strokeWidth="1.5" />
            <rect x="4" y="14" width="7" height="7" fill="#c4c4c4" />
          </Icon>
        </Segment>
        <Segment width="w-[33px]">
          <Icon>
            <path d="M5 2v9M0 6h10" stroke="#c4c4c4" strokeWidth="1.5" />
            <rect x="8" y="14" width="13" height="5" rx="1" fill="#c4c4c4" />
          </Icon>
        </Segment>
        <Segment width="w-[137px]">
          <Icon w={18}>
            <path d="M1 2v17h17M1 13h6v6" stroke="#bdbdbd" strokeWidth="1.5" />
          </Icon>
          <Icon>
            <circle cx="11" cy="11" r="8.5" stroke="#2d80e4" strokeWidth="2.5" />
            <path d="M10 11h12M17 7l4 4-4 4" stroke="#2d80e4" strokeWidth="2" />
          </Icon>
          <Arrow big />
          <Icon>
            <path d="M1 1l20 19M11 0v22" stroke="#bdbdbd" strokeWidth="1.5" />
          </Icon>
          <Arrow big />
        </Segment>
        <Segment width="w-[85px]">
          <Icon>
            <path d="M1 19h20M1 19L18 3" stroke="#2d80e4" strokeWidth="2" />
            <rect x="7" y="9" width="5" height="5" fill="#2d80e4" />
          </Icon>
          <Icon>
            <rect x="4" y="4" width="16" height="16" stroke="#2d80e4" strokeWidth="2" />
            <circle cx="4" cy="4" r="3" fill="#17a317" stroke="#063" />
          </Icon>
          <Arrow big />
        </Segment>
        <Segment width="w-[34px]">
          <Icon>
            <path d="M0 3h22" stroke="#2d80e4" strokeWidth="3" />
            <path d="M0 9h13M0 14h22" stroke="#2d8cf5" strokeWidth="4" />
            <path d="M0 19h13" stroke="#2d80e4" strokeWidth="3" />
          </Icon>
        </Segment>
        <Segment width="w-[33px]">
          <Icon w={20} h={20}>
            <path d="M1 1h18v18H1z" stroke="#c4c4c4" />
            <path d="M2 4h16M2 8h16M2 12h16M2 16h16" stroke="#c4c4c4" strokeWidth="2" strokeDasharray="2 2" />
            <path d="M4 6h14M4 10h14M4 14h14" stroke="#c4c4c4" strokeWidth="2" strokeDasharray="2 2" />
          </Icon>
        </Segment>
        <Segment width="w-[33px]">
          <Icon>
            <path d="M4 1v7M0 4h8" stroke="#c4c4c4" strokeWidth="1.5" />
            <path d="M6 7h11v11H6z" fill="#b9c9a8" />
            <path d="M9 9h11v11H9z" fill="#8fb573" stroke="#a9c492" />
          </Icon>
        </Segment>
        <Segment width="w-[54px]" double>
          <Icon>
            <path d="M5 6l8-3 7 4v9l-8 5-7-4zM5 7l7 4 8-4M12 11v9" stroke="#c4c4c4" strokeWidth="1.5" />
            <rect x="0" y="1" width="6" height="6" fill="#17a317" stroke="#032" />
          </Icon>
          <Arrow big />
        </Segment>
        <Segment width="w-[141px]" double>
          <Icon>
            <path d="M3 2v17h18M3 19L15 8" stroke="#bdbdbd" strokeWidth="1.5" />
            <path d="M17 1l-7 8h5l-3 6 9-9h-4z" fill="#c4c4c4" />
            <circle cx="3" cy="19" r="2" fill="#c4c4c4" />
          </Icon>
          <Icon>
            <path d="M11 2l9 4v10l-9 5-9-5V6zM2 6l9 4 9-4M11 10v11" stroke="#a8a8a8" strokeWidth="1.4" />
          </Icon>
          <Arrow big />
          <Icon>
            <path d="M11 2l8 4v10l-8 5-8-5V6z" stroke="#9a9a9a" strokeWidth="1.4" />
            <rect x="9" y="9" width="4" height="5" stroke="#ccc" />
            <path d="M8 2h6" stroke="#3f8fe8" strokeWidth="3" />
            <path d="M1 16h5" stroke="#3a9b3a" strokeWidth="3" />
            <path d="M17 16h4" stroke="#c23b2e" strokeWidth="3" />
          </Icon>
          <Arrow big />
        </Segment>
        <Segment width="w-[202px]" double>
          <Annotate extra={<circle cx="16" cy="5" r="3.5" stroke="#c9c9c9" strokeWidth="1.5" />} />
          <Annotate extra={<path d="M20 0l-7 6h5l-3 5" stroke="#d0d0d0" strokeWidth="1.5" />} />
          <Annotate />
          <button type="button" className="pl-1">
            1:1 / 100%
          </button>
          <Arrow big />
        </Segment>
        <Segment width="w-[54px]">
          <Icon w={18} h={18}>
            <circle cx="9" cy="9" r="4.5" stroke="#c4c4c4" strokeWidth="4" />
            <path d="M9 0v18M0 9h18M3 3l12 12M15 3L3 15" stroke="#c4c4c4" strokeWidth="3" strokeDasharray="3 12" />
          </Icon>
          <Arrow big />
        </Segment>
        <Segment width="w-[35px]" double>
          <Icon w={20} h={20}>
            <path d="M10 0v20M0 10h20" stroke="#c9c9c9" strokeWidth="2.5" />
          </Icon>
        </Segment>
        <Segment width="w-[130px]">
          <span className="pl-[6px]">
            <Icon w={10} h={20}>
              <path d="M1 1h8v18H1z" fill="#bdbdbd" />
              <path d="M5 4h4M6 8h3M5 12h4M6 16h3" stroke="#555" />
            </Icon>
          </span>
          <button type="button" className="pr-2 font-bold">
            十進位
          </button>
          <Arrow big />
        </Segment>
        <Segment width="w-[35px]" double>
          <Icon w={20} h={20}>
            <path d="M4 3h12v15H4zM4 7h12M4 11h12M4 14h12M8 7v11M12 7v11" stroke="#bdbdbd" />
          </Icon>
        </Segment>
        <Segment width="w-[54px]">
          <Icon w={24}>
            <path d="M11 17H1V2h19v5M1 4h19" stroke="#bdbdbd" strokeWidth="1.8" />
            <path d="M18 12V9c0-3 4-3 4 0v2" stroke="#bdbdbd" strokeWidth="1.5" />
            <rect x="10" y="12" width="10" height="8" fill="#c9c9c9" />
          </Icon>
          <Arrow big />
        </Segment>
        <Segment width="w-[35px]" double>
          <Icon>
            <rect x="1" y="2" width="8" height="7" stroke="#bdbdbd" strokeWidth="1.5" />
            <circle cx="16" cy="9" r="4.5" stroke="#bdbdbd" strokeWidth="1.5" />
            <path d="M9 13l5 7H5z" stroke="#bdbdbd" strokeWidth="1.5" />
          </Icon>
        </Segment>
        <div className="flex h-full w-3 items-center overflow-hidden pl-1">
          <Icon>
            <circle cx="11" cy="11" r="9" fill="#0e3c78" stroke="#2d80e4" strokeWidth="2.5" />
          </Icon>
        </div>
      </div>
    </footer>
  );
}

// Freehand pen strokes laid over the canvas and the command window.
function PenStrokes() {
  return (
    <svg
      width="300"
      height="280"
      viewBox="3 800 300 280"
      className="pointer-events-none absolute bottom-0 left-0"
      aria-hidden="true"
      fill="none"
      stroke="#dc1010"
      strokeWidth="2"
      strokeLinejoin="round"
      strokeLinecap="round"
    >
      <path d="M228 955l-2-30-3-30v-66c0-8-6-10-10-4l-16 27v-11l10-22 2-7h13l8 5 9 12 6 7" />
      <path d="M235 973h-30c-22 6-34 22-37 50-1 18 4 28 18 37 16 7 40 7 62 5 6-3 6-9 7-16" />
      <path d="M175 1000c6-20 20-27 44-25 20 2 36 4 38 24 1 22 1 42-3 49-8 6-30 5-46 3-20-8-34-24-33-45z" strokeWidth="3" />
      <path d="M195 970c30-4 50-2 66 6 14 9 18 20 18 34-1 24-12 37-30 42-22 4-36 3-47-2l-20-14" />
    </svg>
  );
}

export default function App() {
  return (
    <div className="relative flex min-h-screen flex-col border-t-3 border-l-3 border-black bg-[#5a5a5a] pl-[3px] font-['Liberation_Serif','Noto_Sans_CJK_TC',serif] font-light">
      <TitleBar />
      <RibbonTabs />
      <Ribbon />
      <DocumentTabs />
      <Drawing />
      <CommandWindow />
      <StatusBar />
      <PenStrokes />
    </div>
  );
}
